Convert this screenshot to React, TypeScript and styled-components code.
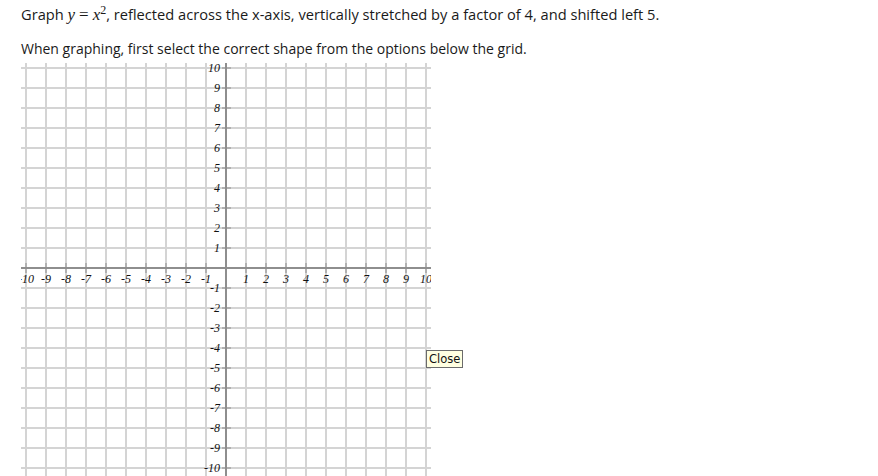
import React from 'react'
import styled, { createGlobalStyle } from 'styled-components'

const GlobalStyle = createGlobalStyle`
  html, body {
    margin: 0;
    padding: 0;
    background: #ffffff;
  }
  body {
    font-family: 'Open Sans', 'DejaVu Sans', sans-serif;
    color: #1a1a1a;
  }
`

const Page = styled.div`
  padding: 4px 0 0 21px;
  width: 857px;
  height: 476px;
  overflow: hidden;
  box-sizing: border-box;
`

const Question = styled.p`
  margin: 0;
  font-size: 14.65px;
  line-height: 20px;
  white-space: nowrap;
`

const Instruction = styled.p`
  margin: 15px 0 0 0;
  font-size: 14px;
  line-height: 20px;
  white-space: nowrap;
`

const MathVar = styled.span`
  font-family: 'Liberation Serif', 'Times New Roman', serif;
  font-style: italic;
  font-size: 17px;
  line-height: 1;
`

const MathOp = styled.span`
  font-family: 'Liberation Serif', 'Times New Roman', serif;
  font-size: 17px;
  line-height: 1;
  margin: 0 4px;
`

const Sup = styled.sup`
  font-family: 'Liberation Serif', 'Times New Roman', serif;
  font-size: 12px;
  line-height: 0;
`

const GraphWrap = styled.div`
  position: relative;
  margin-top: 3px;
  width: 410px;
  height: 414px;
`

const CloseButton = styled.button`
  position: absolute;
  left: 405px;
  top: 288px;
  height: 18px;
  padding: 0 2px;
  background: #ffffe1;
  border: 1px solid #6b6b6b;
  border-radius: 0;
  font-family: 'DejaVu Sans', 'Open Sans', sans-serif;
  font-size: 11.5px;
  line-height: 15px;
  color: #111;
  cursor: pointer;
`

const GRID = '#d4d4d4'
const AXIS = '#8e8e8e'
const OX = 205
const OY = 206
const S = 20

const Graph: React.FC = () => {
  const vals = Array.from({ length: 21 }, (_, i) => i - 10)
  const labels = vals.filter((v) => v !== 0)
  return (
    <svg width={410} height={414} viewBox="0 0 410 414" style={{ display: 'block' }}>
      {vals.map((v) => (
        <line key={'v' + v} x1={OX + v * S} x2={OX + v * S} y1={1} y2={414} stroke={GRID} strokeWidth={2} />
      ))}
      {vals.map((v) => (
        <line key={'h' + v} y1={OY - v * S} y2={OY - v * S} x1={0} x2={410} stroke={GRID} strokeWidth={2} />
      ))}
      <line x1={OX} x2={OX} y1={1} y2={414} stroke={AXIS} strokeWidth={2} />
      <line y1={OY} y2={OY} x1={0} x2={410} stroke={AXIS} strokeWidth={2} />
      {vals.map((v) => (
        <g key={'t' + v}>
          <line x1={OX + v * S} x2={OX + v * S} y1={OY - 5} y2={OY + 5} stroke={AXIS} strokeWidth={1} />
          <line y1={OY - v * S} y2={OY - v * S} x1={OX - 4} x2={OX + 5} stroke={AXIS} strokeWidth={1} />
        </g>
      ))}
      <g fontFamily="'Liberation Serif', 'Times New Roman', serif" fontStyle="italic" fontSize={12} fill="#111">
        {labels.map((v) => (
          <text key={'xl' + v} x={OX + v * S} y={OY + 15} textAnchor="middle">
            {v}
          </text>
        ))}
        {labels.map((v) => (
          <text key={'yl' + v} x={OX - 6} y={OY - v * S + 4} textAnchor="end">
            {v}
          </text>
        ))}
      </g>
    </svg>
  )
}

export default function App() {
  return (
    <>
      <GlobalStyle />
      <Page>
        <Question>
          Graph <MathVar>y</MathVar>
          <MathOp>=</MathOp>
          <MathVar>x</MathVar>
          <Sup>2</Sup>, reflected across the x-axis, vertically stretched by a factor of 4, and shifted left 5.
        </Question>
        <Instruction>When graphing, first select the correct shape from the options below the grid.</Instruction>
        <GraphWrap>
          <Graph />
          <CloseButton>Close</CloseButton>
        </GraphWrap>
      </Page>
    </>
  )
}
